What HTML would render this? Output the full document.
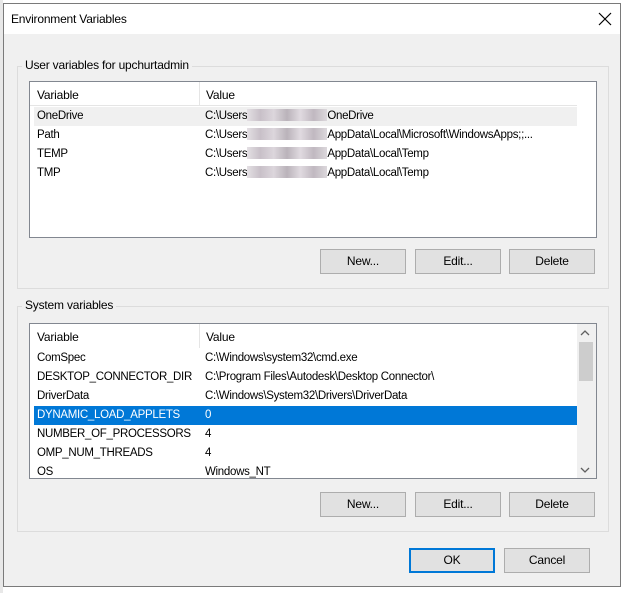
<!DOCTYPE html>
<html><head><style>
*{margin:0;padding:0;box-sizing:border-box}
body{width:628px;height:593px;background:#fff;position:relative;overflow:hidden;font-family:"Liberation Sans",sans-serif;font-size:12px;color:#000;letter-spacing:-0.2px}
.a{position:absolute}
.dlg{left:3px;top:3px;width:618px;height:584px;background:#f0f0f0;border:1px solid #7a7a7a}
.title{left:0;top:0;width:616px;height:30px;background:#fff}
.grp{border:1px solid #dcdcdc}
.lbl{background:#f0f0f0;padding:0 3px}
.list{background:#fff;border:1px solid #828790}
.btn{background:#e1e1e1;border:1px solid #adadad;text-align:center;line-height:23px;height:25px;width:86px}
.row{height:19px;line-height:19px;white-space:nowrap;font-size:11.5px;letter-spacing:-0.3px}
.row span.c{display:inline-block;width:171px;padding-left:3px;overflow:hidden;vertical-align:top}
.blur{display:inline-block;width:80px;height:12px;vertical-align:-2px;background:linear-gradient(90deg,#e4e0e4,#c8c0c8,#dcd6dc,#bab3ba,#e0dae0,#c0b8c0,#dcd8dc)}
</style></head><body>
<div class="a" style="left:0;top:0;width:3px;height:593px;background:#e8e8e8"></div>
<div class="a dlg">
 <div class="a title"><span class="a" style="left:7px;top:8px">Environment Variables</span>
  <svg class="a" style="left:594px;top:8px" width="14" height="14"><path d="M1 1L13 13M13 1L1 13" stroke="#000" stroke-width="1.2"/></svg></div>
 <div class="a grp" style="left:13px;top:62px;width:592px;height:223px"></div>
 <span class="a lbl" style="left:18px;top:54px">User variables for upchurtadmin</span>
 <div class="a list" style="left:25px;top:77px;width:568px;height:157px">
  <div class="a" style="left:0;top:0;width:547px;height:24px;border-bottom:1px solid #e5e5e5"></div>
  <div class="a" style="left:169px;top:0;width:1px;height:24px;background:#e5e5e5"></div>
  <span class="a" style="left:7px;top:6px">Variable</span><span class="a" style="left:176px;top:6px">Value</span>
  <div class="a" style="left:4px;top:25px;width:543px">
   <div class="row" style="background:#f0f0f0"><span class="c">OneDrive</span>C:\Users<span class="blur"></span>OneDrive</div>
   <div class="row"><span class="c">Path</span>C:\Users<span class="blur"></span>AppData\Local\Microsoft\WindowsApps;;...</div>
   <div class="row"><span class="c">TEMP</span>C:\Users<span class="blur"></span>AppData\Local\Temp</div>
   <div class="row"><span class="c">TMP</span>C:\Users<span class="blur"></span>AppData\Local\Temp</div>
  </div>
 </div>
 <div class="a btn" style="left:316px;top:245px">New...</div>
 <div class="a btn" style="left:411px;top:245px">Edit...</div>
 <div class="a btn" style="left:505px;top:245px">Delete</div>

 <div class="a grp" style="left:13px;top:302px;width:592px;height:226px"></div>
 <span class="a lbl" style="left:18px;top:294px">System variables</span>
 <div class="a list" style="left:25px;top:319px;width:568px;height:156px;overflow:hidden">
  <div class="a" style="left:169px;top:0;width:1px;height:24px;background:#e5e5e5"></div>
  <span class="a" style="left:7px;top:6px">Variable</span><span class="a" style="left:176px;top:6px">Value</span>
  <div class="a" style="left:4px;top:25px;width:543px">
   <div class="row"><span class="c">ComSpec</span>C:\Windows\system32\cmd.exe</div>
   <div class="row"><span class="c">DESKTOP_CONNECTOR_DIR</span>C:\Program Files\Autodesk\Desktop Connector\</div>
   <div class="row"><span class="c">DriverData</span>C:\Windows\System32\Drivers\DriverData</div>
   <div class="row" style="background:#0078d7;color:#fff"><span class="c">DYNAMIC_LOAD_APPLETS</span>0</div>
   <div class="row"><span class="c">NUMBER_OF_PROCESSORS</span>4</div>
   <div class="row"><span class="c">OMP_NUM_THREADS</span>4</div>
   <div class="row"><span class="c">OS</span>Windows_NT</div>
  </div>
  <div class="a" style="left:547px;top:0;width:19px;height:154px;background:#f0f0f0"></div>
  <div class="a" style="left:549px;top:18px;width:14px;height:39px;background:#cdcdcd"></div>
  <svg class="a" style="left:550px;top:5px" width="10" height="8"><path d="M1 6L5 2L9 6" stroke="#606060" fill="none" stroke-width="1.3"/></svg>
  <svg class="a" style="left:550px;top:142px" width="10" height="8"><path d="M1 2L5 6L9 2" stroke="#606060" fill="none" stroke-width="1.3"/></svg>
 </div>
 <div class="a btn" style="left:316px;top:488px">New...</div>
 <div class="a btn" style="left:411px;top:488px">Edit...</div>
 <div class="a btn" style="left:505px;top:488px">Delete</div>

 <div class="a btn" style="left:405px;top:544px;border:2px solid #0078d7;line-height:21px">OK</div>
 <div class="a btn" style="left:500px;top:544px">Cancel</div>
</div>
</body></html>
